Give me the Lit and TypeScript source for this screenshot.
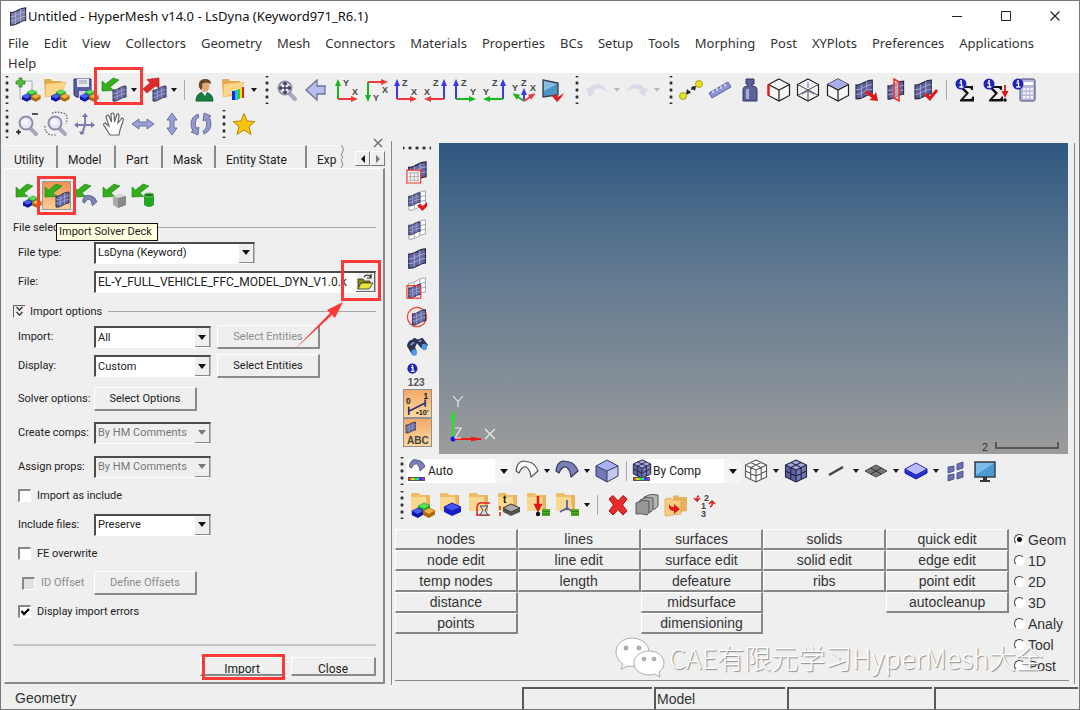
import { LitElement, html, css, svg, nothing } from "lit";
import { customElement, state } from "lit/decorators.js";
import { classMap } from "lit/directives/class-map.js";

/* ---------- icon building blocks, all on a 24 x 24 canvas ---------- */

const mesh = (x: number, y: number, s = 1, fill = "#6368a2") => svg`
  <g transform="translate(${x} ${y}) scale(${s})">
    <path d="M0 4C4 5 7 0 13 0V11C8 11 5 16 0 15Z" fill=${fill} stroke="#24253f" stroke-width=".9"/>
    <path d="M0 7.7C4 8.500 7 4 13 3.7M0 11.4C4 12 7 7.500 13 7.4M4.3 3.5V14.3M8.6 1.2V12" fill="none" stroke="#b0b3de" stroke-width=".7"/>
  </g>`;

const ghostMesh = (x: number, y: number, s = 1) => svg`
  <g transform="translate(${x} ${y}) scale(${s})">
    <path d="M0 4C4 5 7 0 13 0V11C8 11 5 16 0 15ZM0 7.7C4 8.500 7 4 13 3.7M0 11.4C4 12 7 7.500 13 7.4M4.3 3.5V14.3M8.6 1.2V12" fill="#fff" stroke="#9a9aa6" stroke-width=".7"/>
  </g>`;

const slab = (x: number, y: number, s: number, top: string, side: string) => svg`
  <g transform="translate(${x} ${y}) scale(${s})">
    <path d="M0 4V8L6 11L12 7.5V3.5L6 7Z" fill=${side}/>
    <path d="M0 4L6 1L12 3.5L6 7Z" fill=${top} stroke=${side} stroke-width=".6"/>
  </g>`;

const trio = (x: number, y: number, s = 1) => svg`
  <g transform="translate(${x} ${y}) scale(${s})">
    ${slab(4, 0, 0.8, "#5be05b", "#159a1e")}
    ${slab(-1, 4, 0.8, "#4f5ff0", "#0d16ac")}
    ${slab(8, 4, 0.8, "#f5b040", "#b0670a")}
  </g>`;

const folder = (x = 1, y = 1) => svg`
  <g transform="translate(${x} ${y})">
    <path d="M0 2L1 1H7L8 3H18V17L1 19Z" fill="#e2aa4e"/>
    <path d="M2 6L22 4L18 16L1 19Z" fill="#fbd58a" stroke="#e8b860" stroke-width=".5"/>
  </g>`;

const tallFolder = svg`
  <path d="M1 2V1L2 0H9L10 2H20V18H1Z" fill="#eebd68"/>
  <path d="M1 4H20V17L18 18H1Z" fill="#f9d892"/><path d="M16 2H20V18H17Z" fill="#e9b35a"/>`;

const inArrow = (x: number, y: number, fill = "#35ae1c") => svg`
  <path transform="translate(${x} ${y})" d="M0 13V3L3.500 6L11 0L17 2L8 9L12 12.500Z" fill=${fill} stroke="#1d7d10" stroke-width=".6"/>`;

const outArrow = svg`
  <path d="M1 11L8 5L5 1.500L17 0L17 10L13.500 8L5 15Z" fill="#e02a2a" stroke="#a01515" stroke-width=".6"/>`;

const lens = (x: number, y: number) => svg`
  <g transform="translate(${x} ${y})">
    <path d="M11 12L17 18" stroke="#a6a8c0" stroke-width="4" stroke-linecap="round"/>
    <circle cx="7" cy="7" r="6.500" fill="#e4e6fb" stroke="#8c8fa6" stroke-width="2"/>
    <circle cx="6" cy="6" r="3" fill="#fff" opacity=".7"/>
  </g>`;

const glyph = (x: number, y: number, t: string, size = 8, fill = "#444") => svg`
  <text x=${x} y=${y} font-family="Liberation Sans" font-size=${size} font-weight="bold" fill=${fill}>${t}</text>`;

const COLORS: Record<string, string> = { r: "#f0383c", g: "#16b61c", b: "#3a3ae8" };
const line = (x1: number, y1: number, x2: number, y2: number, c: string) => {
  const a = (Math.atan2(y2 - y1, x2 - x1) * 180) / Math.PI;
  return svg`<path d="M${x1} ${y1}L${x2} ${y2}" stroke=${COLORS[c]} stroke-width="2"/>
    <path d="M-4 -3L3 0L-4 3Z" transform="translate(${x2} ${y2}) rotate(${a})" fill=${COLORS[c]}/>`;
};

const hexOutline = "M12 1L22.500 6.500V17.500L12 23L1.500 17.500V6.500Z";
const wireCube = (extra: unknown) => svg`
  <path d=${hexOutline} fill="#f6f6f6" stroke="#222" stroke-width="1.200"/>${extra}`;
const cubeY = svg`<path d="M1.500 6.500L12 12L22.500 6.500M12 12V23" fill="none" stroke="#222" stroke-width="1.200"/>`;

const gridCube = (top: string, left: string, right: string, stroke = "#26263a") => svg`
  <path d="M12 1L22.500 6V18L12 23L1.500 18V6Z" fill=${left}/>
  <path d="M12 11L22.500 6V18L12 23Z" fill=${right}/>
  <path d="M12 1L22.500 6L12 11L1.500 6Z" fill=${top}/>
  <path d="M12 1L22.500 6V18L12 23L1.500 18V6ZM1.500 6L12 11L22.500 6M12 11V23M6.700 3.500L17.200 8.500V20.500M17.200 3.500L6.700 8.500V20.500M1.500 12L12 17L22.500 12" fill="none" stroke=${stroke} stroke-width="1.100"/>`;

const shell = (fill: string, stroke: string) => svg`
  <path d="M1 12Q2 3 8 2L14 3Q20 4 23 12L16 18Q15 10 11 8Q7 7 4 14Z" fill=${fill} stroke=${stroke} stroke-width="1.200" stroke-linejoin="round"/>`;

const badge = (x: number, y: number) => svg`
  <circle cx=${x} cy=${y} r="5.500" fill="#1f25b4"/>
  <path d="M${x - 1.5} ${y - 1}H${x + 0.5}V${y + 3}M${x - 1.8} ${y + 3}H${x + 2.4}" stroke="#fff" stroke-width="1.300" fill="none"/><circle cx=${x} cy=${y - 3} r="1" fill="#fff"/>`;

const sigma = svg`<path d="M5 8H18V12H16.500Q16 10 14 10H9L14 15L8.500 21H15Q17 21 17.500 18.500H19V23.500H5V22L11 15.500L5 9.500Z" fill="#111"/>`;

const redCheck = svg`<path d="M10 17L13 15L16 18L22 11L24 13L16 23Z" fill="#e01818"/>`;

const ICONS: Record<string, unknown> = {
  app: mesh(3, 2, 1.4, "#7b7fa6"),
  newModel: svg`<path d="M5 3H17V21H5Z" fill="#f4f4f8" stroke="#aaa"/><path d="M4 0H7V3H10V6H7V9H4V6H1V3H4Z" fill="#56c436" stroke="#27841a" stroke-width=".8"/>${trio(8, 11, 1)}`,
  open: svg`${folder(0, 0)}${trio(8, 11, 1)}`,
  save: svg`<path d="M1 1H18V19H3L1 17Z" fill="#585ea4" stroke="#34386e"/><path d="M4 1H16V9H4Z" fill="#e8e9f8"/><path d="M6 13H14V19H6Z" fill="#d0d2ea"/><path d="M6 3H14M6 5H14" stroke="#999"/>${trio(8, 11, 1)}`,
  importDeck: svg`${inArrow(0, 0)}${mesh(11, 8, 1)}`,
  exportDeck: svg`${outArrow}${mesh(11, 8, 1)}`,
  user: svg`<path d="M3 23Q3 15 11 14Q20 15 20 23Z" fill="#1b7f45" stroke="#0c5a2c"/><path d="M9 14L12 18L14 14Z" fill="#fff"/><ellipse cx="12" cy="8" rx="4.500" ry="6" fill="#e2aa7a"/><path d="M6 9Q5 1 12 1Q18 1 18 6Q13 3 9 6Q10 10 8 12Z" fill="#6b4423"/>`,
  results: svg`${folder(0, 0)}<path d="M10 13H13V22H10Z" fill="#1c25d8"/><path d="M13 12H16V22H13Z" fill="#18c3e8"/><path d="M16 11H18V21H16Z" fill="#2bd02b"/><path d="M18 10H20V20H18Z" fill="#f1e21c"/><path d="M20 9H22V20H20Z" fill="#e8201c"/>`,
  fit: svg`${lens(3, 3)}<path d="M10 5V15M5 10H15M8 6.500L10 4.500L12 6.500M8 13.500L10 15.500L12 13.500M6.500 8L4.500 10L6.500 12M13.500 8L15.500 10L13.500 12" stroke="#3a3b50" stroke-width="1.300" fill="none"/>`,
  back: svg`<path d="M2 12L13 2V8H21V16H13V22Z" fill="#b8bcec" stroke="#6d719c" stroke-width="1.300"/>`,
  xy: svg`${line(4, 21, 4, 4, "g")}${line(4, 21, 21, 21, "r")}${glyph(9, 8, "Y", 9)}${glyph(18, 17, "X", 9)}`,
  xyDown: svg`${line(4, 4, 21, 4, "r")}${line(4, 4, 4, 21, "g")}${glyph(9, 23, "Y", 9)}${glyph(18, 15, "X", 9)}`,
  xz: svg`${line(4, 21, 4, 4, "b")}${line(4, 21, 21, 21, "r")}${glyph(9, 8, "Z", 9)}${glyph(18, 17, "X", 9)}`,
  zx: svg`${line(21, 21, 21, 4, "b")}${line(21, 21, 4, 21, "r")}${glyph(10, 8, "Z", 9)}${glyph(1, 17, "X", 9)}`,
  yz: svg`${line(4, 21, 4, 4, "b")}${line(4, 21, 21, 21, "g")}${glyph(9, 8, "Z", 9)}${glyph(18, 17, "Y", 9)}`,
  zy: svg`${line(21, 21, 21, 4, "b")}${line(21, 21, 4, 21, "g")}${glyph(10, 8, "Z", 9)}${glyph(1, 17, "Y", 9)}`,
  iso: svg`${line(12, 23, 12, 13, "b")}${line(12, 23, 3, 17, "g")}${line(12, 23, 21, 17, "r")}${glyph(0, 13, "Y", 9)}${glyph(9, 8, "Z", 9)}${glyph(18, 13, "X", 9)}`,
  view: svg`<path d="M2 2L17 5V17L2 19Z" fill="#4a94c8" stroke="#3a3d50" stroke-width="1.300"/><path d="M3 3L16 6L3 13Z" fill="#9fd0ee" opacity=".7"/><path d="M11 18L15 16L17 19L23 15Q20 21 16 24Z" fill="#e01818"/>`,
  undo: svg`<path d="M1 9L4 19L10 15L8 13Q15 7 22 14Q18 2 6 8L4 11Z" fill="#d9daea"/>`,
  redo: svg`<path d="M23 9L20 19L14 15L16 13Q9 7 2 14Q6 2 18 8L20 11Z" fill="#d9daea"/>`,
  distance: svg`<path d="M8 16L16 8" stroke="#222" stroke-width="1.600" stroke-dasharray="4 2"/><path d="M7 16L8 11L12 15ZM17 8L16 13L12 9Z" fill="#222"/><circle cx="4" cy="18" r="3.500" fill="#e8e21a" stroke="#8a860c" stroke-width=".7"/><circle cx="20" cy="6" r="3.500" fill="#e8e21a" stroke="#8a860c" stroke-width=".7"/>`,
  ruler: svg`<path d="M1 15L20 4L23 9L4 20Z" fill="#8f95d4" stroke="#5d62a0"/><path d="M5 15V12.500M9 13V10M13 11V8M17 8.500V6" stroke="#eef" stroke-width="1.200"/>`,
  mass: svg`<path d="M8 1H16V6H14V8Q19 8 19 12V23H5V12Q5 8 10 8V6H8Z" fill="#5d6298" stroke="#33365c"/><path d="M8 11H11V21H8Z" fill="#a8adda"/>`,
  edges: wireCube(svg`${cubeY}<path d="M1.500 6.500V17.500" stroke="#e81c1c" stroke-width="2.500"/>`),
  wire: wireCube(svg`<path d="M12 4V10M6 16L11 13M18 16L13 13" stroke="#9297d0" stroke-width="1.500"/><path d="M1.500 6.500L22.500 17.500M22.500 6.500L1.500 17.500M12 12V23" stroke="#444"/>`),
  faces: wireCube(svg`<path d="M12 1L22.500 6.500L12 12L1.500 6.500Z" fill="#aab0ec"/>${cubeY}`),
  normals: svg`${mesh(1, 2, 1.25, "#5c6094")}<path d="M12 12L19 17L21 14L23 23L14 22L17 20L10 15Z" fill="#e01818"/>`,
  section: svg`${mesh(3, 3, 1.2, "#5c6094")}<path d="M9 1L14 4V23L9 20Z" fill="#f6c9c9" fill-opacity=".6" stroke="#ee2b2b" stroke-width="1.500"/>`,
  checkMesh: svg`${mesh(1, 2, 1.25, "#5c6094")}${redCheck}`,
  sum: svg`${sigma}${badge(6, 6)}`,
  sumAlert: svg`${sigma}<path d="M21 7V17M19 14L21 18L23 14Z" stroke="#e01818" stroke-width="1.800" fill="#e01818"/><circle cx="21" cy="22" r="1.800" fill="#111"/>${badge(5, 6)}`,
  calc: svg`<rect x="7" y="1" width="15" height="22" rx="1.500" fill="#b5b8dc" stroke="#45486c"/><path d="M10 4H20V7H10Z" fill="#fff"/><path d="M10 10H12.500V12.500H10ZM13.500 10H16V12.500H13.500ZM17.300 10H20V12.500H17.300ZM10 14H12.500V16.500H10ZM13.500 14H16V16.500H13.500ZM17.300 14H20V16.500H17.300ZM10 18H12.500V20.500H10ZM13.500 18H16V20.500H13.500ZM17.300 18H20V20.500H17.300Z" fill="#f5f5ff"/>${badge(5, 6)}`,
  zoom: svg`${lens(4, 4)}<path d="M17 2H23M1 20H6M3.500 17.500V22.500" stroke="#222" stroke-width="1.600"/>`,
  zoomArea: svg`${lens(4, 4)}<path d="M8 1Q14 -1 22 2Q24 6 22 12M1 14Q0 19 6 23H12" stroke="#555" stroke-width="1.200" stroke-dasharray="1.500 1.500" fill="none"/>`,
  orbit: svg`<path d="M3 13H20M9 21Q13 14 12 4" stroke="#7d82ac" stroke-width="2" fill="none"/><path d="M9 5L12 1L15 5ZM18 10L22 13L18 16ZM5 10L1 13L5 16ZM6 19L8 23L12 21Z" fill="#7479a6"/>`,
  hand: svg`<path d="M8 23L3 15Q0 12 3 11L7 14L4 5Q5 2 7 4L9.500 10L9 2Q11 0 12 2L12.500 10L15 2Q17 1 17 4L16 11L20 6Q22 6 21 9L18 18L17 23Z" fill="#fff" stroke="#666" stroke-width="1.200"/>`,
  panX: svg`<path d="M1 12L8 7V10H16V7L23 12L16 17V14H8V17Z" fill="#9ba0d8" stroke="#6b70a4"/>`,
  panY: svg`<path d="M12 1L17 8H14V16H17L12 23L7 16H10V8H7Z" fill="#9ba0d8" stroke="#6b70a4"/>`,
  spin: svg`<path d="M9 2Q2 5 2 12Q2 16 4 19L2 20L9 23L10 15L7.500 16.500Q6 13 6.500 10Q7 6 10 5ZM15 22Q22 19 22 12Q22 8 20 5L22 4L15 1L14 9L16.500 7.500Q18 11 17.500 14Q17 18 14 19Z" fill="#9297ce" stroke="#5b6094" stroke-width=".8"/>`,
  star: svg`<path d="M12 1.500L15 9L23 9.500L17 14.500L19 22.500L12 18L5 22.500L7 14.500L1 9.500L9 9Z" fill="#f8c40c" stroke="#b98605"/>`,
  inModel: svg`${inArrow(0, 0)}${trio(8, 11, 1)}`,
  inGeom: svg`${inArrow(0, 0)}<g transform="translate(8 10) scale(.65)">${shell("#7e84b8", "#4c5080")}</g>`,
  inCube: svg`${inArrow(0, 0)}<path d="M10 12L18 10L23 12V21L15 24L10 21Z" fill="#a9a9a9"/><path d="M10 12L18 10L23 12L15 14Z" fill="#ddd"/><path d="M15 14L23 12V21L15 24Z" fill="#8a8a8a"/>`,
  inCan: svg`${inArrow(0, 0)}<path d="M12 11V21Q17 25 22 21V11Z" fill="#22a522"/><ellipse cx="17" cy="11" rx="5" ry="2" fill="#2d6e2d" stroke="#5fd65f"/>`,
  maskBox: svg`${mesh(3, 1, 1.45)}<path d="M1 10H16V24H1Z" fill="#f4f4f4" stroke="#ee3a2b" stroke-width="1.300"/><path d="M3 13H14M3 17H14M3 21H14M5 12V22M9 12V22M13 12V22" stroke="#999" stroke-width=".8"/>`,
  unmaskAll: svg`${ghostMesh(3, 1, 1.4)}${mesh(3, 3, 0.95)}<path d="M12 17L16 15L18 18L23 13V18L18 23Z" fill="#e01818"/>`,
  reverse: svg`${ghostMesh(3, 1, 1.4)}${mesh(3, 3, 0.95)}`,
  showAll: mesh(3, 1, 1.4),
  unmaskBox: svg`${ghostMesh(3, 1, 1.4)}${mesh(3, 8, 1)}<path d="M1 9.500H16V23H1Z" fill="none" stroke="#ee3a2b" stroke-width="1.300"/>`,
  sphere: svg`<circle cx="12" cy="12" r="10.500" fill="#f7e6e4" stroke="#ee4a3b" stroke-width="1.400"/>${mesh(7, 4, 1.1)}`,
  find: svg`<path d="M1 12Q2 6 7 5L9 3L13 5L18 3L24 11L20 16L16 14L12 9L10 13L12 20L7 22Z" fill="#2a3358"/><ellipse cx="9" cy="19" rx="3" ry="3.500" fill="#4e9ae8"/><ellipse cx="20" cy="13" rx="3" ry="3.500" fill="#4e9ae8"/><path d="M5 11L9 8M14 7L17 6" stroke="#8b93c4" stroke-width="2"/>`,
  ids: svg`${badge(7, 5)}${glyph(2, 24, "123", 11, "#555")}`,
  measureTag: svg`${glyph(0, 12, "0", 9, "#222")}${glyph(19, 7, "1", 9, "#222")}<path d="M3 20L21 11M3 15V24M21 7V15" stroke="#2b3070" stroke-width="1.800"/>${glyph(11, 24, "•10'", 8, "#222")}`,
  abcTag: svg`${mesh(0, 0, 0.8)}${glyph(1, 24, "ABC", 11, "#444")}`,
  shellWire: shell("#fafafa", "#555"),
  shellFill: shell("#7a7fb8", "#34365c"),
  solid: svg`<path d="M1 7L12 12V23L1 17Z" fill="#7379b4"/><path d="M12 12L23 7V17L12 23Z" fill="#c3c8ee"/><path d="M12 1L23 7L12 12L1 7Z" fill="#a9b2ec"/><path d="M12 1L23 7V17L12 23L1 17V7ZM1 7L12 12L23 7M12 12V23" fill="none" stroke="#343a62"/>`,
  gridWire: gridCube("#fff", "#fff", "#fff", "#555"),
  gridFill: gridCube("#a4a9e4", "#5b60a0", "#7277b6"),
  bar: svg`<path d="M5 16L19 8" stroke="#444" stroke-width="2.400"/>`,
  plate: svg`<path d="M1 12L12 6L23 12L12 18Z" fill="#777" stroke="#444"/><path d="M6.500 9L17.500 15M17.500 9L6.500 15" stroke="#333"/>`,
  blueSlab: svg`<path d="M1 10V14L12 20L23 14V10L12 16Z" fill="#2430e0" stroke="#151b8c"/><path d="M1 10L12 4L23 10L12 16Z" fill="#b6bcfa" stroke="#2a30a0"/>`,
  shrink: svg`<path d="M4 8L10 7V12L4 14ZM13 5L19 3V9L13 11ZM4 16L10 15V20L4 22ZM13 14L19 12V18L13 20Z" fill="#6d72b4" stroke="#40447c" stroke-width=".8"/>`,
  monitor: svg`<path d="M2 3H22V18H2Z" fill="#4a9ad6" stroke="#3d4048" stroke-width="1.500"/><path d="M3 4H21L3 16Z" fill="#a5d4f4" opacity=".6"/><path d="M10 18H14V21H17V23H7V21H10Z" fill="#33363c"/>`,
  paletteShell: svg`<g transform="translate(2 -1) scale(.85)">${shell("#7a7fb8", "#4a4c78")}</g>`,
  fComp: svg`${tallFolder}${trio(3, 9, 1.25)}`,
  fBlue: svg`${tallFolder}<path d="M5 14V19L13 23L22 19V14L13 18Z" fill="#1220c8"/><path d="M5 14L13 10L22 14L13 18Z" fill="#4454f4" stroke="#1220a8"/>`,
  fProp: svg`${tallFolder}<path d="M9 23V14Q10 9 15 10L22 10M9 22H22" stroke="#e02020" stroke-width="1.500" fill="none"/><path d="M12 13H20L17 17L20 22H12L15 17Z" fill="#ddd" stroke="#444"/>`,
  fThick: svg`${tallFolder}${glyph(6, 10, "t", 10, "#111")}<path d="M3 13V17M3 19V23" stroke="#e02020" stroke-width="1.500"/><path d="M6 15V19L14 23L23 19V15L14 19Z" fill="#555"/><path d="M6 15L14 11L23 15L14 19Z" fill="#aaa" stroke="#333"/>`,
  fLoad: svg`${tallFolder}<path d="M12 3V14M9.500 12L12 17L14.500 12Z" stroke="#e01818" stroke-width="2.500" fill="#e01818"/><circle cx="12" cy="21" r="2.200" fill="#111"/><path d="M16 16H24V23H16Z" fill="#4fae22"/><path d="M16 18.500H24M16 21H24" stroke="#1f6a10" stroke-width=".7"/>`,
  fSys: svg`${tallFolder}<path d="M12 7V15L5 19M12 15L18 19" stroke="#5a62b0" stroke-width="1.800" fill="none"/><path d="M16 16H24V23H16Z" fill="#4fae22"/><path d="M16 18.500H24M16 21H24" stroke="#1f6a10" stroke-width=".7"/>`,
  remove: svg`<path d="M3 6L7 2.500L12 8L17 2.500L21 6L16.500 12L21 18L17 22L12 16.500L7 22L3 18L7.500 12Z" fill="#e82c2c" stroke="#a81414"/>`,
  stack: svg`<path d="M9 4Q15 0 23 2V13L20 16H9Z" fill="#b5b5b5" stroke="#555"/><path d="M5 7Q11 3 18 5V16L16 19H5Z" fill="#a5a5a5" stroke="#555"/><path d="M1 10Q7 6 14 8V20L12 22Q6 20 1 21Z" fill="#989898" stroke="#555"/>`,
  fMove: svg`<path d="M9 3L14 2L15 4H23V18L9 20Z" fill="#e7b35a"/><path d="M1 6L7 5L8 7H17V21L1 23Z" fill="#f6cd84" stroke="#dba24a" stroke-width=".7"/><path d="M5 11Q6 14 10 14V11L16 16L10 21V18Q4 18 5 11Z" fill="#e01818"/>`,
  renumber: svg`${glyph(11, 8, "2", 9)}${glyph(8, 16, "1", 9)}${glyph(8, 24, "3", 9)}<path d="M6 3Q4 3 4 7M1 5L4 8L7 5M17 14Q20 13 19 9M16 11L19 8L22 11" stroke="#e01818" stroke-width="1.500" fill="none"/>`,
};

const icon = (name: string) => html`<svg class="ico" viewBox="0 0 24 24" aria-hidden="true">${ICONS[name]}</svg>`;

/* Toolbar entries: an icon name, "name*" for one with a drop arrow, "|" for a divider. */
const FILE_BAR = ["newModel", "open", "save", "importDeck*", "exportDeck*", "|", "user", "results*"];
const VIEW_BAR = ["fit", "back", "xy", "xyDown", "xz", "zx", "yz", "zy", "iso", "view"];
const UNDO_BAR = ["undo*", "redo*"];
const CHECK_BAR = ["distance", "ruler", "mass", "edges", "wire", "faces", "normals", "section", "checkMesh", "|", "sum", "sumAlert", "calc"];
const ZOOM_BAR = ["zoom", "zoomArea", "orbit", "hand", "panX", "panY", "spin"];
const SIDE_BAR = ["maskBox", "unmaskAll", "reverse", "showAll", "unmaskBox", "sphere", "find", "ids", "measureTag", "abcTag"];
const COLLECT_BAR = ["fComp", "fBlue", "fProp", "fThick", "fLoad", "fSys*", "|", "remove", "stack", "fMove", "renumber"];

const MENU = ["File", "Edit", "View", "Collectors", "Geometry", "Mesh", "Connectors", "Materials", "Properties", "BCs", "Setup", "Tools", "Morphing", "Post", "XYPlots", "Preferences", "Applications", "Help"];
const PAGES = ["Geom", "1D", "2D", "3D", "Analy", "Tool", "Post"];
const PANELS = [
  ["nodes", "lines", "surfaces", "solids", "quick edit"],
  ["node edit", "line edit", "surface edit", "solid edit", "edge edit"],
  ["temp nodes", "length", "defeature", "ribs", "point edit"],
  ["distance", "", "midsurface", "", "autocleanup"],
  ["points", "", "dimensioning", "", ""],
];

@customElement("app-root")
export class AppRoot extends LitElement {
  @state() private page = "Geom";

  static styles = css`
    :host {
      --face: #efefef;
      --dark: #4c4c4c;
      --shade: #8a8a8a;
      --mark: #fb3a38;
      display: flex;
      flex-direction: column;
      box-sizing: border-box;
      min-height: 100vh;
      position: relative;
      overflow: hidden;
      border: 1px solid #777;
      background: var(--face);
      color: #222;
      font: 11px/16px Roboto, "Liberation Sans", sans-serif;
    }
    * { box-sizing: border-box; }
    button, select, input { font: inherit; color: inherit; margin: 0; }
    button { padding: 0; border: 0; background: none; }

    .title { display: flex; align-items: center; height: 31px; padding: 0 0 2px 7px; background: #fff; color: #111; font: 13px/18px "Noto Sans", sans-serif; }
    .title .ico { width: 20px; height: 20px; }
    .title h1 { flex: 1; margin: 0; font: inherit; }
    .title button { width: 49px; height: 29px; }
    .title button svg { display: block; margin: auto; }
    .menu { display: flex; flex-wrap: wrap; column-gap: 15px; padding: 1px 20px 0 7px; background: #fff; font: 13px/20px "Noto Sans", sans-serif; }
    .menu a { color: #333; text-decoration: none; }

    .bars { display: flex; gap: 4px; height: 34px; padding-left: 1px; align-items: center; }
    .bar { display: flex; align-items: center; }
    .bar.files { width: 256px; }
    .bar.views { width: 306px; }
    .bar.checks { width: 374px; }
    .grip { flex: none; width: 10px; height: 28px; background: radial-gradient(circle, #222 1px, transparent 2px) center / 10px 7px repeat-y; }
    .tool { flex: 1 0 29px; display: flex; justify-content: center; align-items: center; height: 28px; }
    .ico { display: block; width: 24px; height: 24px; overflow: visible; }
    .drop { flex: none; width: 11px; height: 24px; display: grid; place-items: center; }
    .tri { width: 0; height: 0; border: 3px solid transparent; border-top: 4px solid #111; border-bottom: 0; }
    .dim .tri { border-top-color: #bbb; }
    .rule { flex: none; width: 1px; height: 20px; margin: 0 5px; background: #aaa; }
    .marked { position: relative; display: flex; align-items: center; }
    .marked::after { content: ""; position: absolute; inset: -5px; border: 3px solid var(--mark); pointer-events: none; z-index: 3; }
    .bar .marked::after { inset: -9px -4px -1px -5px; }

    .work { flex: 1; display: flex; }
    .browser { flex: none; width: 391px; display: flex; flex-direction: column; padding: 4px 6px 1px 3px; border-right: 1px solid var(--shade); }
    .tabs { display: grid; grid-template-columns: 54px 58px 47px 53px 91px 1fr 8px 38px; height: 23px; position: relative; font-size: 12px; }
    .tabs .tab { text-align: left; padding: 5px 0 0 10px; border-right: 2px solid var(--shade); border-top: 1px solid #fbfbfb; white-space: nowrap; }
    .tabs .tab:nth-child(6) { border-right: 0; }
    .scroll { display: flex; align-self: center; justify-self: end; margin-top: 4px; }
    .scroll button { width: 15px; height: 15px; border: 1px solid #fff; border-right-color: #777; border-bottom-color: #777; display: grid; place-items: center; }
    .close { position: absolute; right: 0; top: -8px; width: 14px; height: 12px; }
    .close svg { display: block; }
    .sheet { flex: 1; display: flex; flex-direction: column; padding: 12px 7px 6px 8px; border: 1px solid #fff; border-right: 2px solid var(--shade); border-bottom: 2px solid var(--shade); }
    .kinds { display: flex; height: 29px; margin-bottom: 6px; }
    .kinds > * { flex: none; width: 29px; height: 29px; }
    .kinds .tool { width: 29px; height: 29px; }
    .kinds .on { border: 1px solid #999; background: linear-gradient(#ef9253, #fbcf98); }
    .tip { position: absolute; left: 14px; top: 42px; z-index: 2; padding: 0 5px 0 2px; border: 1px solid #111; background: #ffffe1; color: #222; white-space: nowrap; }

    .group { display: grid; gap: 6px; }
    .group.loose { gap: 11px; margin: 10px 0 6px; }
    .head { display: flex; align-items: center; gap: 4px; height: 23px; margin: 0 0 2px; font: inherit; }
    .head::after { content: ""; flex: 1; height: 1px; margin-left: 2px; background: #a8a8a8; }
    .head.more { margin-top: 7px; }
    .fold { width: 13px; height: 13px; border: 1px solid #666; border-right-color: #fff; border-bottom-color: #fff; }
    .fold svg { display: block; }
    .row { display: grid; grid-template-columns: 76px auto 1fr; align-items: center; height: 23px; padding-left: 5px; justify-items: start; }
    .combo { display: grid; width: 117px; height: 22px; background: #fff; border: 2px solid var(--dark); border-right: 1px solid #bbb; border-bottom: 1px solid #fff; }
    .combo.long { width: 161px; }
    .combo select { grid-area: 1 / 1; appearance: none; border: 0; outline: 0; background: none; padding: 0 18px 0 2px; width: 100%; opacity: 1; }
    .combo .knob { grid-area: 1 / 1; justify-self: end; width: 15px; display: grid; place-items: center; background: var(--face); border-right: 1px solid var(--shade); border-bottom: 1px solid var(--shade); pointer-events: none; }
    .knob .tri { border-width: 5px 4px 0; }
    .combo.off { background: var(--face); color: #777; }
    .off .tri { border-top-color: #777; }
    .push { height: 24px; width: 103px; border: 1px solid #fff; border-right: 2px solid var(--shade); border-bottom: 2px solid var(--shade); background: var(--face); }
    .push:disabled, .check.off { color: #8c8c8c; }
    .combo + .push { margin-left: 6px; }
    .path { grid-column: 2 / 4; display: flex; width: 100%; height: 22px; background: #fff; border: 2px solid var(--dark); border-right: 1px solid #bbb; border-bottom: 1px solid #fff; font-size: 12px; }
    .path input { flex: 1; min-width: 0; border: 0; outline: 0; padding: 0 0 0 2px; background: none; }
    .browse { width: 19px; height: 19px; background: var(--face); border-right: 1px solid #666; border-bottom: 1px solid #666; }
    .browse svg { display: block; }
    .path .marked { height: 19px; }
    .path .marked::after { inset: -13px -6px -9px -15px; }
    .pointer { position: absolute; right: 30px; top: 28px; z-index: 3; pointer-events: none; }
    .check { display: flex; align-items: center; gap: 6px; }
    .row.sub { padding-left: 9px; grid-template-columns: 72px auto; }
    .row.wide { grid-template-columns: auto; }
    .check input { appearance: none; width: 13px; height: 13px; background: #fff; border: 1px solid #fff; border-top: 2px solid #888; border-left: 2px solid #888; }
    .check input:disabled { background: #e2e2e2; }
    .check input:checked { background: #fff url("data:image/svg+xml,%3Csvg xmlns='http://www.w3.org/2000/svg' viewBox='0 0 10 10'%3E%3Cpath d='M1.500 4L4 7L9 2' fill='none' stroke='black' stroke-width='2.200'/%3E%3C/svg%3E") center / 10px 10px no-repeat; }
    .foot { display: flex; justify-content: flex-end; gap: 6px; margin-top: auto; padding-top: 11px; border-top: 2px solid #c4c4c4; }
    .foot .push { width: 85px; height: 19px; overflow: hidden; line-height: 22px; display: block; font-size: 12px; }
    .foot .marked::after { inset: -3px 0 -4px 2px; }

    .main { flex: 1; min-width: 0; display: flex; flex-direction: column; margin: 2px 4px 1px 0; padding-left: 3px; border-right: 1px solid var(--shade); }
    .stage { display: flex; height: 311px; padding-right: 6px; }
    .side { flex: none; width: 44px; display: flex; flex-direction: column; align-items: center; padding-top: 1px; }
    .side::before { content: ""; width: 28px; height: 8px; margin-bottom: 5px; background: radial-gradient(circle, #222 1px, transparent 2px) center / 7px 8px repeat-x; }
    .side button { flex: none; width: 29px; height: 29px; display: grid; place-items: center; }
    .side .ico { width: 22px; height: 22px; }
    .side .on { border: 1px solid #8f8f8f; background: linear-gradient(#f4a96a, #fbd9a0); }
    .view { flex: 1; background: linear-gradient(#2f5881, #5f7890 40%, #9c9c9c); display: flex; justify-content: space-between; align-items: flex-end; }
    .view svg { display: block; }
    .view svg text { font-family: "Liberation Sans", sans-serif; }
    .strip { display: flex; align-items: center; height: 34px; padding-left: 2px; }
    .strip .pick { display: grid; width: 105px; height: 24px; background: #fff; color: #222; font-size: 12px; }
    .strip .pick > * { grid-area: 1 / 1; }
    .pick select { appearance: none; border: 0; outline: 0; background: none; padding: 0 17px 0 21px; width: 100%; }
    .pick .knob { justify-self: end; align-self: stretch; width: 17px; display: grid; place-items: center; background: #f4f4f4; pointer-events: none; }
    .strip .pick.big { width: 109px; }
    .pick .ico { width: 20px; height: 20px; pointer-events: none; }
    .pick .swatch { align-self: end; width: 17px; height: 4px; margin: 0 0 2px 1px; border: 1px solid #555; background: linear-gradient(90deg, #e22, #ee2 25%, #2d2 45%, #2ee 60%, #22e 75%, #e2e); }
    .strip .tool { flex: none; width: 29px; }

    .panels { display: flex; flex: 1; padding-top: 7px; margin: 0 5px 3px 0; border-bottom: 1px solid var(--shade); font: 14px/18px "Liberation Sans", sans-serif; color: #333; }
    .grid { flex: 1; display: grid; grid-template-columns: repeat(5, 1fr); grid-auto-rows: 21px; }
    .grid button { border: 1px solid #fff; border-right: 2px solid #858585; border-bottom: 2px solid #858585; }
    .pages { flex: none; width: 60px; padding-left: 5px; }
    .pages label { display: flex; align-items: center; gap: 3px; height: 21px; white-space: nowrap; }
    .pages input { appearance: none; flex: none; width: 11px; height: 11px; border-radius: 50%; background: #fff; border: 1px solid #fff; border-top-color: #444; border-left-color: #444; }
    .pages input:checked { background: radial-gradient(circle, #111 2px, #fff 3px); }

    .status { display: flex; height: 24px; padding-right: 1px; font: 14px/22px "Liberation Sans", sans-serif; color: #333; }
    .status .now { width: 521px; padding-left: 14px; padding-top: 2px; }
    .status .cells { flex: 1; display: grid; grid-template-columns: 130px 131px 145px 1fr; column-gap: 2px; padding-top: 2px; }
    .status .cells span { border-top: 2px solid #5a5a5a; border-left: 2px solid #5a5a5a; line-height: 20px; padding-left: 1px; }

    .brand { position: absolute; right: 36px; bottom: 30px; z-index: 4; display: flex; align-items: center; gap: 4px; color: #fff; font: 300 27px/42px "Noto Sans CJK SC", sans-serif; text-shadow: 1px 1px 1px #888; pointer-events: none; white-space: nowrap; }
    .brand svg { display: block; }
  `;

  private bar(items: string[], kind = "") {
    return html`<div class="bar ${kind}" role="toolbar">
      <span class="grip"></span>${items.map((i) => this.entry(i))}
    </div>`;
  }

  private entry(item: string) {
    if (item === "|") return html`<span class="rule"></span>`;
    const name = item.replace("*", "");
    const off = name === "undo" || name === "redo";
    const body = html`<button class="tool" aria-label=${name}>${icon(name)}</button>
      ${item.endsWith("*") ? html`<button class=${classMap({ drop: true, dim: off })} aria-label="${name} options"><i class="tri"></i></button>` : nothing}`;
    return name === "importDeck" ? html`<div class="marked">${body}</div>` : body;
  }

  private combo(id: string, value: string, kind = "", off = false) {
    return html`<div class="combo ${kind} ${off ? "off" : ""}">
      <select id=${id} ?disabled=${off}><option>${value}</option></select>
      <span class="knob"><i class="tri"></i></span>
    </div>`;
  }

  private browser() {
    return html`<aside class="browser">
      <div class="tabs" role="tablist">
        ${["Utility", "Model", "Part", "Mask", "Entity State", "Exp"].map((t) => html`<button class="tab" role="tab">${t}</button>`)}
        <svg width="8" height="23" aria-hidden="true"><path d="M2 0Q6 4 3 8Q1 11 4 12Q1 14 3 17Q5 20 2 23" fill="none" stroke="#888"/></svg>
        <div class="scroll">
          <button aria-label="Previous tabs"><svg width="6" height="8"><path d="M5 0V8L1 4Z" fill="#111"/></svg></button>
          <button aria-label="Next tabs"><svg width="6" height="8"><path d="M1 0V8L5 4Z" fill="#777"/></svg></button>
        </div>
        <button class="close" aria-label="Close"><svg width="14" height="12"><path d="M3 2L11 10M11 2L3 10" stroke="#666" stroke-width="1.200"/></svg></button>
      </div>
      <div class="sheet">
        <div class="kinds">
          <button class="tool" aria-label="Import model">${icon("inModel")}</button>
          <div class="marked">
            <button class="tool on" aria-label="Import solver deck" aria-describedby="tip">${icon("importDeck")}</button>
            <span class="tip" id="tip" role="tooltip">Import Solver Deck</span>
          </div>
          <button class="tool" aria-label="Import geometry">${icon("inGeom")}</button>
          <button class="tool" aria-label="Import solid">${icon("inCube")}</button>
          <button class="tool" aria-label="Import BOM">${icon("inCan")}</button>
        </div>
        <h2 class="head">File selection</h2>
        <div class="group">
          <div class="row"><label for="ftype">File type:</label>${this.combo("ftype", "LsDyna (Keyword)", "long")}</div>
          <div class="row"><label for="file">File:</label>
            <div class="path">
              <input id="file" type="text" value="EL-Y_FULL_VEHICLE_FFC_MODEL_DYN_V1.0.k">
              <div class="marked">
                <button class="browse" aria-label="Browse"><svg width="18" height="18" viewBox="0 0 18 18"><path d="M2 6H7L8 8H14V10H5L2 16Z" fill="#8a8a10" stroke="#333" stroke-width=".8"/><path d="M5 10H17L13 16H2Z" fill="#e8e43a" stroke="#333" stroke-width=".8"/><path d="M8 4Q11 0 15 4M15 1V5H11" fill="none" stroke="#222" stroke-width="1.200"/></svg></button>
                <svg class="pointer" width="52" height="50" viewBox="0 0 52 50"><path d="M1 49L37 12L34 9L50 1L42 17L39 14Z" fill="#fb3a38"/></svg>
              </div>
            </div>
          </div>
        </div>
        <h2 class="head more"><button class="fold" aria-label="Collapse"><svg width="11" height="11"><path d="M2.500 1L5.500 4L8.500 1M2.500 6L5.500 9L8.500 6" fill="none" stroke="#333" stroke-width="1.300"/></svg></button>Import options</h2>
        <div class="group">
          <div class="row"><label for="imp">Import:</label>${this.combo("imp", "All")}<button class="push" disabled>Select Entities</button></div>
          <div class="row"><label for="disp">Display:</label>${this.combo("disp", "Custom")}<button class="push">Select Entities</button></div>
        </div>
        <div class="group loose">
          <div class="row"><span>Solver options:</span><button class="push">Select Options</button></div>
          <div class="row"><label for="comps">Create comps:</label>${this.combo("comps", "By HM Comments", "", true)}</div>
          <div class="row"><label for="props">Assign props:</label>${this.combo("props", "By HM Comments", "", true)}</div>
        </div>
        <div class="group">
          <div class="row wide"><label class="check"><input type="checkbox">Import as include</label></div>
          <div class="row"><label for="inc">Include files:</label>${this.combo("inc", "Preserve")}</div>
          <div class="row wide"><label class="check"><input type="checkbox">FE overwrite</label></div>
          <div class="row sub"><label class="check off"><input type="checkbox" disabled>ID Offset</label><button class="push" disabled>Define Offsets</button></div>
          <div class="row wide"><label class="check"><input type="checkbox" checked>Display import errors</label></div>
        </div>
        <div class="foot">
          <div class="marked"><button class="push">Import</button></div>
          <button class="push">Close</button>
        </div>
      </div>
    </aside>`;
  }

  private pick(label: string, glyphName: string, value: string, kind = "") {
    return html`<div class="pick ${kind}">
      <select aria-label=${label}><option>${value}</option></select>
      ${icon(glyphName)}<span class="swatch"></span><span class="knob"><i class="tri"></i></span>
    </div>`;
  }

  private main() {
    return html`<main class="main">
      <div class="stage">
        <div class="side" role="toolbar">
          ${SIDE_BAR.map((n) => html`<button class=${classMap({ on: n.endsWith("Tag") })} aria-label=${n}>${icon(n)}</button>`)}
        </div>
        <div class="view">
          <svg width="64" height="60" viewBox="0 0 64 60">
            <path d="M14 45V18" stroke="#1ee81e" stroke-width="2"/><path d="M11.500 26L14 16L16.500 26Z" fill="#1ee81e"/>
            <path d="M14 45H42" stroke="#f01c1c" stroke-width="2"/><path d="M32 42.500L43 45L32 47.500Z" fill="#f01c1c"/>
            <circle cx="14" cy="45" r="2.500" fill="#1414e8"/>
            <path d="M14 2L19 7.500L24 2M19 7.500V13M16 34H22L16 44H22M46 35L56 45M56 35L46 45" fill="none" stroke="#eee" stroke-width="1.100"/>
          </svg>
          <svg width="90" height="18" viewBox="0 0 90 18"><text x="4" y="15" font-size="11" fill="#333">2</text><path d="M18 6V12H80V6" fill="none" stroke="#444" stroke-width="1.500"/></svg>
        </div>
      </div>
      <div class="strip" role="toolbar">
        <span class="grip"></span>
        ${this.pick("Color mode", "paletteShell", "Auto")}
        ${["shellWire*", "shellFill*", "solid", "|"].map((i) => this.entry(i))}
        ${this.pick("Element color", "gridFill", "By Comp", "big")}
        ${["gridWire*", "gridFill*", "bar*", "plate*", "blueSlab*", "shrink", "monitor"].map((i) => this.entry(i))}
      </div>
      <div class="strip" role="toolbar"><span class="grip"></span>${COLLECT_BAR.map((i) => this.entry(i))}</div>
      <div class="panels">
        <div class="grid">
          ${PANELS.flat().map((p) => (p ? html`<button>${p}</button>` : html`<span></span>`))}
        </div>
        <div class="pages" role="radiogroup">
          ${PAGES.map((p) => html`<label><input type="radio" name="page" .checked=${this.page === p} @change=${() => (this.page = p)}>${p}</label>`)}
        </div>
      </div>
    </main>`;
  }

  render() {
    return html`
      <header class="title">
        ${icon("app")}
        <h1>Untitled - HyperMesh v14.0 - LsDyna (Keyword971_R6.1)</h1>
        <button aria-label="Minimize"><svg width="10" height="10"><path d="M0 5.500H10" stroke="#222"/></svg></button>
        <button aria-label="Maximize"><svg width="10" height="10"><path d="M.5 .5H9.500V9.500H.5Z" fill="none" stroke="#222"/></svg></button>
        <button aria-label="Close window"><svg width="10" height="10"><path d="M.5 .5L9.500 9.500M9.500 .5L.5 9.500" stroke="#222" stroke-width="1.200"/></svg></button>
      </header>
      <nav class="menu">${MENU.map((m) => html`<a href="#">${m}</a>`)}</nav>
      <div class="bars">
        ${this.bar(FILE_BAR, "files")}${this.bar(VIEW_BAR, "views")}${this.bar(UNDO_BAR)}${this.bar(CHECK_BAR, "checks")}
      </div>
      <div class="bars">${this.bar(ZOOM_BAR)}${this.bar(["star"])}</div>
      <div class="work">${this.browser()}${this.main()}</div>
      <footer class="status">
        <span class="now">Geometry</span>
        <div class="cells"><span></span><span>Model</span><span></span><span></span></div>
      </footer>
      <div class="brand">
        <svg width="50" height="42" viewBox="0 0 50 42">
          <g fill="#fff" stroke="#999" stroke-width=".8">
            <path d="M17 1C8 1 1 7 1 15C1 20 4 24 8 27L6 32L13 29Q17 30 20 29C28 29 34 23 34 15C34 7 26 1 17 1Z"/>
            <path d="M34 14C26 14 19 19 19 26C19 33 26 38 34 38Q37 38 40 37L45 40L44 35C47 33 49 30 49 26C49 19 42 14 34 14Z"/>
          </g>
          <g fill="#bbb" stroke="#777" stroke-width=".6"><circle cx="11" cy="11" r="2"/><circle cx="24" cy="11" r="2"/><circle cx="29" cy="22" r="1.800"/><circle cx="39" cy="22" r="1.800"/></g>
        </svg>
        <span>CAE有限元学习HyperMesh大全</span>
      </div>`;
  }
}
